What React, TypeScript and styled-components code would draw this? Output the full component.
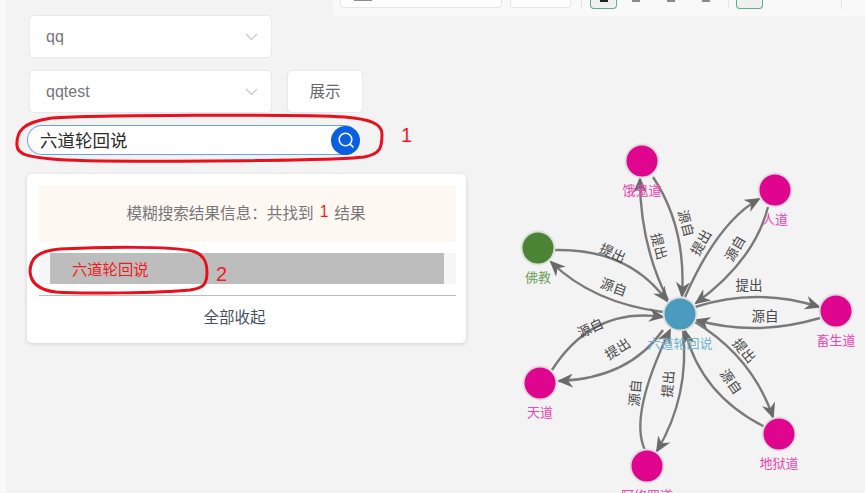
import React from "react";
import styled, { createGlobalStyle } from "styled-components";

const Global = createGlobalStyle`
  html, body { margin: 0; padding: 0; background: #f3f3f3; }
  body { font-family: "Liberation Sans", "Noto Sans CJK SC", sans-serif; overflow: hidden; }
`;

const Page = styled.div`
  position: relative;
  width: 865px;
  height: 493px;
  overflow: hidden;
  display: flex;
  background: #f3f3f3;
`;
const Strip = styled.div`
  width: 6px;
  flex: none;
  background: #f9f9f9;
`;
const Left = styled.div`
  position: relative;
  width: 499px;
  flex: none;
  box-sizing: border-box;
  padding: 15px 0 0 21px;
  display: flex;
  flex-direction: column;
`;
const Row = styled.div`
  display: flex;
  gap: 15px;
  margin: 0 0 12px 2px;
`;
const Select = styled.div`
  box-sizing: border-box;
  width: 243px;
  height: 43px;
  padding: 0 13px 0 16px;
  display: flex;
  align-items: center;
  justify-content: space-between;
  background: #fff;
  border: 1px solid #e8e8ea;
  border-radius: 5px;
  font-size: 16px;
  color: #77777c;
`;
const ShowButton = styled.div`
  box-sizing: border-box;
  width: 76px;
  height: 43px;
  padding-bottom: 3px;
  display: flex;
  align-items: center;
  justify-content: center;
  background: #fff;
  border: 1px solid #e8e8ea;
  border-radius: 5px;
  font-size: 15.5px;
  color: #66666b;
`;
const Search = styled.div`
  box-sizing: border-box;
  width: 332px;
  height: 30px;
  margin-bottom: 19px;
  padding-left: 12px;
  display: flex;
  align-items: center;
  justify-content: space-between;
  background: #fff;
  border: 1px solid #6f9fe8;
  border-right: none;
  border-radius: 15px;
  font-size: 17.5px;
  color: #2b2b2b;
`;
const SearchText = styled.span`
  margin-bottom: 2px;
`;
const SearchButton = styled.div`
  width: 29px;
  height: 29px;
  margin-right: -1px;
  border-radius: 50%;
  background: #0a5fe0;
  display: flex;
  align-items: center;
  justify-content: center;
`;
const Card = styled.div`
  box-sizing: border-box;
  width: 439px;
  height: 169px;
  padding: 11px 10px 0 12px;
  background: #fff;
  border-radius: 5px;
  box-shadow: 0 1px 4px rgba(0, 0, 0, 0.14);
`;
const Info = styled.div`
  box-sizing: border-box;
  height: 57px;
  margin-bottom: 11px;
  padding: 0 3px 3px 0;
  display: flex;
  align-items: center;
  justify-content: center;
  background: #fdf8f2;
  font-size: 15.6px;
  color: #77777a;
`;
const Count = styled.span`
  margin: 0 6px;
  color: #f01c1c;
`;
const ResultRow = styled.div`
  height: 31px;
  padding: 0 12px 0 11px;
  background: #f6f6f6;
`;
const ResultBar = styled.div`
  box-sizing: border-box;
  height: 100%;
  padding: 0 0 1px 22px;
  display: flex;
  align-items: center;
  background: #bdbdbd;
  font-size: 15.3px;
  color: #f01c1c;
`;
const Collapse = styled.div`
  margin-top: 11px;
  height: 43px;
  padding: 0 26px 2px 0;
  box-sizing: border-box;
  border-top: 1px solid #bdbdc0;
  display: flex;
  align-items: center;
  justify-content: center;
  font-size: 15.5px;
  color: #45505f;
`;
const Mark = styled.svg`
  position: absolute;
  left: -6px;
  top: 0;
  width: 505px;
  height: 320px;
  pointer-events: none;
`;
const Number = styled.span<{ $x: number; $y: number }>`
  position: absolute;
  left: ${(p) => p.$x}px;
  top: ${(p) => p.$y}px;
  font-size: 20px;
  line-height: 22px;
  color: #ee1c25;
`;
const Graph = styled.svg`
  flex: none;
  width: 360px;
  height: 493px;
  text { font-family: "Noto Sans CJK SC", sans-serif; }
`;
const Toolbar = styled.div`
  position: absolute;
  top: 0;
  right: 0;
  width: 532px;
  height: 16px;
  box-sizing: border-box;
  padding-left: 7px;
  display: flex;
  gap: 8px;
  align-items: flex-start;
  background: #f9f9f9;
  border-bottom-left-radius: 5px;
`;
const ToolField = styled.div<{ $w: number }>`
  width: ${(p) => p.$w}px;
  height: 8px;
  background: #fff;
  border: 1px solid #e6e6e6;
  border-top: none;
  border-radius: 0 0 4px 4px;
  box-sizing: border-box;
  flex: none;
  padding-left: 13px;
`;
const ToolFieldText = styled.div`
  width: 18px;
  height: 1px;
  background: #8a8a8a;
`;
const ToolSep = styled.div<{ $l: number }>`
  width: 1px;
  height: 9px;
  background: #e4e4e4;
  margin-left: ${(p) => p.$l}px;
  flex: none;
`;
const ToolToggle = styled.div<{ $l: number }>`
  width: 27px;
  height: 9px;
  box-sizing: border-box;
  margin-left: ${(p) => p.$l}px;
  background: #f0f0f0;
  border: 1px solid #5fae8c;
  border-top: none;
  border-radius: 0 0 4px 4px;
  flex: none;
  display: flex;
  justify-content: center;
`;
const ToolToggleMark = styled.div`
  width: 8px;
  height: 2px;
  background: #222;
`;
const ToolDot = styled.div<{ $l: number }>`
  width: 8px;
  height: 2px;
  background: #8a8a8a;
  margin-left: ${(p) => p.$l}px;
  flex: none;
`;

const Chevron = () => (
  <svg width="13" height="8" viewBox="0 0 13 8" fill="none" stroke="#c4c6cc" strokeWidth="1.2">
    <path d="M1 1l5.5 5.5L12 1" />
  </svg>
);

type Pt = [number, number];
const curve = (a: Pt, m: Pt, b: Pt) => {
  const cx = 2 * m[0] - (a[0] + b[0]) / 2;
  const cy = 2 * m[1] - (a[1] + b[1]) / 2;
  return `M${a[0]} ${a[1]}Q${cx} ${cy} ${b[0]} ${b[1]}`;
};

const edges: [Pt, Pt, Pt][] = [
  [[668, 300], [647, 242], [640, 179]],
  [[653, 177], [677, 232], [682, 296]],
  [[685, 297], [720, 235], [759, 199]],
  [[768, 207], [743, 258], [696, 303]],
  [[555, 250], [620, 262], [667, 301]],
  [[663, 312], [600, 295], [551, 262]],
  [[695, 307], [757, 297], [819, 307]],
  [[820, 318], [757, 328], [696, 320]],
  [[552, 370], [600, 325], [663, 317]],
  [[663, 330], [620, 367], [559, 381]],
  [[645, 450], [643, 403], [670, 330]],
  [[683, 330], [680, 393], [657, 451]],
  [[695, 322], [743, 363], [773, 417]],
  [[765, 427], [713, 387], [685, 331]],
];

const edgeLabels: [string, number, number, number][] = [
  ["提出", 660, 246, 75],
  ["源自", 687, 223, 75],
  ["提出", 700, 242, -60],
  ["源自", 734, 248, -60],
  ["提出", 613, 252, 25],
  ["源自", 614, 286, 20],
  ["提出", 749, 284, 0],
  ["源自", 765, 315, 0],
  ["源自", 590, 327, -25],
  ["提出", 617, 348, -32],
  ["源自", 634, 393, -85],
  ["提出", 667, 384, -85],
  ["提出", 745, 350, 50],
  ["源自", 732, 381, 55],
];

const nodes: [string, number, number, string, string][] = [
  ["饿鬼道", 642, 161, "#e0058f", "#ee45b0"],
  ["人道", 775, 190, "#e0058f", "#ee45b0"],
  ["佛教", 538, 248, "#4b8432", "#6f9f5a"],
  ["畜生道", 836, 311, "#e0058f", "#ee45b0"],
  ["天道", 540, 383, "#e0058f", "#ee45b0"],
  ["地狱道", 779, 434, "#e0058f", "#ee45b0"],
  ["阿修罗道", 647, 466, "#e0058f", "#ee45b0"],
  ["六道轮回说", 680, 314, "#4b9bbe", "#72b4d2"],
];

export default function App() {
  return (
    <Page>
      <Global />
      <Strip />
      <Left>
        <Row>
          <Select>
            qq
            <Chevron />
          </Select>
        </Row>
        <Row>
          <Select>
            qqtest
            <Chevron />
          </Select>
          <ShowButton>展示</ShowButton>
        </Row>
        <Search>
          <SearchText>六道轮回说</SearchText>
          <SearchButton>
            <svg width="18" height="18" viewBox="0 0 18 18" fill="none" stroke="#fff" strokeWidth="1.6">
              <circle cx="8.5" cy="8.5" r="6.3" />
              <path d="M13 13l3 3" strokeLinecap="round" />
            </svg>
          </SearchButton>
        </Search>
        <Card>
          <Info>
            模糊搜索结果信息：共找到<Count>1</Count>结果
          </Info>
          <ResultRow>
            <ResultBar>六道轮回说</ResultBar>
          </ResultRow>
          <Collapse>全部收起</Collapse>
        </Card>
        <Mark viewBox="0 0 505 320" fill="none" stroke="#e8101c">
          <path
            strokeWidth="3"
            d="M52 118C92 115 300 114 345 117C368 119 382 123 382 134C382 147 381 154 364 157C330 161 90 163 52 159C30 157 18 155 17 146C16 132 22 122 52 118Z"
          />
          <path
            strokeWidth="3"
            d="M60 249C100 247 170 246 192 251C204 254 207 262 207 272C207 284 204 288 190 290C160 293 80 294 56 292C38 290 31 282 30 272C30 258 38 251 60 249Z"
          />
        </Mark>
        <Number $x={395} $y={124}>1</Number>
        <Number $x={210} $y={263}>2</Number>
      </Left>
      <Graph viewBox="505 0 360 493">
        <defs>
          <marker id="arrow" viewBox="0 0 16 14" refX="14" refY="7" markerWidth="16" markerHeight="14" markerUnits="userSpaceOnUse" orient="auto">
            <path d="M0 0L16 7L0 14L5 7Z" fill="#6a6a6a" />
          </marker>
        </defs>
        {edges.map(([a, m, b], i) => (
          <path key={i} d={curve(a, m, b)} fill="none" stroke="#7a7a7a" strokeWidth="2.4" markerEnd="url(#arrow)" />
        ))}
        {edgeLabels.map(([t, x, y, r], i) => (
          <text key={i} x={x} y={y} fontSize="13.5" fill="#4a4a4a" textAnchor="middle" dominantBaseline="central" transform={`rotate(${r} ${x} ${y})`}>
            {t}
          </text>
        ))}
        {nodes.map(([t, x, y, c, lc]) => (
          <g key={t}>
            <circle cx={x} cy={y} r="16.5" fill={c} stroke="#dedede" strokeWidth="2" />
            <text x={x} y={y + 28} fontSize="13" fill={lc} textAnchor="middle" dominantBaseline="central">
              {t}
            </text>
          </g>
        ))}
      </Graph>
      <Toolbar>
        <ToolField $w={162}>
          <ToolFieldText />
        </ToolField>
        <ToolField $w={61} />
        <ToolSep $l={2} />
        <ToolToggle $l={0}>
          <ToolToggleMark />
        </ToolToggle>
        <ToolDot $l={7} />
        <ToolDot $l={19} />
        <ToolDot $l={19} />
        <ToolSep $l={10} />
        <ToolToggle $l={-1} />
        <ToolSep $l={70} />
      </Toolbar>
    </Page>
  );
}
